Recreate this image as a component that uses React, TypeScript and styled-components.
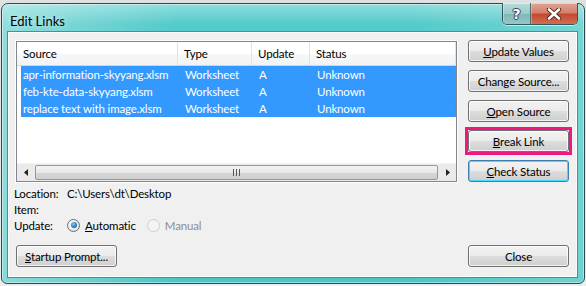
import React from 'react';
import styled, { createGlobalStyle, css } from 'styled-components';

const GlobalStyle = createGlobalStyle`
    html, body {
        margin: 0;
        padding: 0;
        background: #e6e8e8;
    }
    body {
        font-family: Lato, 'Noto Sans', sans-serif;
        font-size: 11.5px;
        letter-spacing: -0.15px;
        color: #000;
    }
`;

const rows = [
    { source: 'apr-information-skyyang.xlsm', type: 'Worksheet', update: 'A', status: 'Unknown' },
    { source: 'feb-kte-data-skyyang.xlsm', type: 'Worksheet', update: 'A', status: 'Unknown' },
    { source: 'replace text with image.xlsm', type: 'Worksheet', update: 'A', status: 'Unknown' },
];

const columns = ['Source', 'Type', 'Update', 'Status'];
const colTemplate = '161px 74px 58px 1fr';

export default function App() {
    return (
        <>
            <GlobalStyle />
            <Page>
                <Window>
                    <TitleBar>
                        <Title>Edit Links</Title>
                        <Controls>
                            <HelpBtn>?</HelpBtn>
                            <CloseBtn>
                                <svg width="16" height="12" viewBox="0 0 16 12">
                                    <path d="M3 1.5 L13 10.5 M13 1.5 L3 10.5" stroke="#4a2a24" strokeWidth="4.4" strokeLinecap="round" />
                                    <path d="M3 1.5 L13 10.5 M13 1.5 L3 10.5" stroke="#fff" strokeWidth="2.6" strokeLinecap="round" />
                                </svg>
                            </CloseBtn>
                        </Controls>
                    </TitleBar>
                    <Body>
                        <LeftCol>
                            <ListView>
                                <Header>
                                    {columns.map((c) => (
                                        <HeaderCell key={c}>{c}</HeaderCell>
                                    ))}
                                </Header>
                                <Rows>
                                    {rows.map((r, i) => (
                                        <Row key={r.source} $focused={i === rows.length - 1}>
                                            <Cell>{r.source}</Cell>
                                            <Cell>{r.type}</Cell>
                                            <Cell>{r.update}</Cell>
                                            <Cell>{r.status}</Cell>
                                        </Row>
                                    ))}
                                </Rows>
                                <HScroll>
                                    <Arrow>
                                        <svg width="4" height="7" viewBox="0 0 4 7"><path d="M4 0 L0 3.5 L4 7 Z" fill="#222" /></svg>
                                    </Arrow>
                                    <Thumb>
                                        <Grip />
                                    </Thumb>
                                    <Arrow>
                                        <svg width="4" height="7" viewBox="0 0 4 7"><path d="M0 0 L4 3.5 L0 7 Z" fill="#222" /></svg>
                                    </Arrow>
                                </HScroll>
                            </ListView>
                            <Info>
                                <Label>Location:</Label>
                                <span>C:\Users\dt\Desktop</span>
                                <Label>Item:</Label>
                                <span />
                                <Label>Update:</Label>
                                <Radios>
                                    <RadioOpt>
                                        <Radio $checked />
                                        <span><u>A</u>utomatic</span>
                                    </RadioOpt>
                                    <RadioOpt $disabled>
                                        <Radio $disabled />
                                        <span>Manual</span>
                                    </RadioOpt>
                                </Radios>
                            </Info>
                            <Spacer />
                            <Button><u>S</u>tartup Prompt...</Button>
                        </LeftCol>
                        <RightCol>
                            <Button><u>U</u>pdate Values</Button>
                            <Button>Chan<u>g</u>e Source...</Button>
                            <Button><u>O</u>pen Source</Button>
                            <Button $marked><u>B</u>reak Link</Button>
                            <Button $default><u>C</u>heck Status</Button>
                            <Spacer />
                            <Button>Close</Button>
                        </RightCol>
                    </Body>
                </Window>
            </Page>
        </>
    );
}

const Page = styled.div`
    width: 586px;
    height: 286px;
    padding: 3px 0 0 1px;
    box-sizing: border-box;
    background: linear-gradient(#dfe1e1, #eceeee);
`;

const Window = styled.div`
    width: 584px;
    height: 281px;
    box-sizing: border-box;
    border: 1px solid #2d4a4c;
    border-radius: 7px 7px 6px 6px;
    padding: 0 6px 5px 5px;
    display: flex;
    flex-direction: column;
    background:
        linear-gradient(90deg, rgba(255,255,255,0.35) 0%, rgba(255,255,255,0) 30%, rgba(255,255,255,0) 70%, rgba(255,255,255,0.2) 100%),
        linear-gradient(#8fdede 0px, #54caca 20px, #48c7c6 100%);
    box-shadow: inset 0 0 0 1px rgba(255,255,255,0.45);
`;

const TitleBar = styled.div`
    height: 27px;
    display: flex;
    align-items: flex-start;
    justify-content: space-between;
`;

const Title = styled.div`
    padding: 9px 0 0 3px;
    font-size: 13px;
    letter-spacing: 0;
    color: #000;
    text-shadow: 0 0 6px rgba(255,255,255,0.8);
`;

const Controls = styled.div`
    display: flex;
    margin-top: -1px;
    border: 1px solid #35575a;
    border-top: none;
    border-radius: 0 0 5px 5px;
    overflow: hidden;
    box-shadow: 0 1px 0 rgba(255,255,255,0.6);
`;

const ctrlBase = css`
    height: 21px;
    display: flex;
    align-items: center;
    justify-content: center;
    box-shadow: inset 0 1px 0 rgba(255,255,255,0.5), inset 1px 0 0 rgba(255,255,255,0.3);
`;

const HelpBtn = styled.div`
    ${ctrlBase};
    width: 27px;
    border-right: 1px solid #4d6a6c;
    background: linear-gradient(#b6dcdc 0%, #9ccaca 50%, #7fb5b5 51%, #93c9c9 100%);
    color: #fff;
    font-family: 'DejaVu Sans', sans-serif;
    font-weight: bold;
    font-size: 14px;
    text-shadow: 0 0 1px #333, 1px 0 0 #444, -1px 0 0 #444, 0 1px 0 #444, 0 -1px 0 #444;
`;

const CloseBtn = styled.div`
    ${ctrlBase};
    width: 46px;
    background: linear-gradient(#e3a393 0%, #d58068 48%, #c4472f 52%, #d26e52 100%);
`;

const Body = styled.div`
    flex: 1;
    display: flex;
    gap: 11px;
    padding: 8px 7px 10px 8px;
    background: #f0f0f0;
    border: 1px solid #58898b;
    box-shadow: inset 0 0 0 1px #fdfdfd;
`;

const LeftCol = styled.div`
    width: 441px;
    display: flex;
    flex-direction: column;
`;

const RightCol = styled.div`
    width: 101px;
    display: flex;
    flex-direction: column;
    gap: 8px;
`;

const Spacer = styled.div`
    flex: 1;
`;

const ListView = styled.div`
    margin-top: 1px;
    height: 141px;
    box-sizing: border-box;
    border: 1px solid #828790;
    box-shadow: 0 0 0 1px #fdfdfd;
    background: #fff;
    display: flex;
    flex-direction: column;
`;

const Header = styled.div`
    height: 23px;
    display: grid;
    grid-template-columns: ${colTemplate};
    background: linear-gradient(#ffffff 0%, #ffffff 50%, #f7f8fa 51%, #f1f2f4 100%);
    border-bottom: 1px solid #d5d5d5;
`;

const HeaderCell = styled.div`
    display: flex;
    align-items: center;
    padding-left: 6px;
    border-right: 1px solid #e3e3e3;
`;

const Rows = styled.div`
    flex: 1;
    padding: 0 0 0 4px;
`;

const Row = styled.div<{ $focused?: boolean }>`
    height: 17px;
    box-sizing: border-box;
    display: grid;
    grid-template-columns: 157px 74px 58px 1fr;
    align-items: center;
    background: #3399ff;
    color: #fff;
    ${(p) => p.$focused && css`
        outline: 1px dotted #c0722a;
        outline-offset: -1px;
    `}
`;

const Cell = styled.div`
    padding-left: 2px;
    white-space: nowrap;
    overflow: hidden;
    &:not(:first-child) {
        padding-left: 7px;
    }
`;

const HScroll = styled.div`
    height: 17px;
    display: flex;
    align-items: stretch;
    background: #eaeaea;
    border-top: 1px solid #f4f4f4;
`;

const Arrow = styled.div`
    width: 17px;
    display: flex;
    align-items: center;
    justify-content: center;
`;

const Thumb = styled.div`
    flex: 1;
    margin: 1px 1px;
    border: 1px solid #979797;
    border-radius: 2px;
    background: linear-gradient(#f3f3f3 0%, #e8e8e8 50%, #d6d6d6 51%, #cfcfcf 100%);
    display: flex;
    align-items: center;
    justify-content: center;
`;

const Grip = styled.div`
    width: 7px;
    height: 7px;
    background: repeating-linear-gradient(90deg, #555 0 1px, transparent 1px 3px);
`;

const Info = styled.div`
    margin: 3px 0 0 -2px;
    display: grid;
    grid-template-columns: 53px 1fr;
    grid-auto-rows: 16px;
    align-items: center;
`;

const Label = styled.span``;

const Radios = styled.div`
    display: flex;
    align-items: center;
    gap: 11px;
`;

const RadioOpt = styled.label<{ $disabled?: boolean }>`
    display: flex;
    align-items: center;
    gap: 5px;
    color: ${(p) => (p.$disabled ? '#8d8d8d' : '#000')};
`;

const Radio = styled.span<{ $checked?: boolean; $disabled?: boolean }>`
    width: 11px;
    height: 11px;
    border-radius: 50%;
    border: 1px solid ${(p) => (p.$disabled ? '#cfcfcf' : '#6c6c6c')};
    background: ${(p) => (p.$disabled ? '#f4f4f4' : 'radial-gradient(circle at 40% 35%, #ffffff, #dcdcdc)')};
    position: relative;
    ${(p) => p.$checked && css`
        &::after {
            content: '';
            position: absolute;
            left: 2.5px;
            top: 2.5px;
            width: 6px;
            height: 6px;
            border-radius: 50%;
            background: radial-gradient(circle at 40% 35%, #7fd0ff, #0d6bb3 70%, #0a3d6a);
        }
    `}
`;

const Button = styled.div<{ $marked?: boolean; $default?: boolean }>`
    position: relative;
    width: 101px;
    height: 22px;
    box-sizing: border-box;
    display: flex;
    align-items: center;
    justify-content: center;
    white-space: nowrap;
    border: 1px solid #707070;
    border-radius: 3px;
    background: linear-gradient(#f2f2f2 0%, #ebebeb 50%, #dddddd 51%, #cfcfcf 100%);
    box-shadow: inset 0 0 0 1px rgba(255,255,255,0.75);
    ${(p) => p.$default && css`
        border-color: #3c7fb1;
        box-shadow: inset 0 0 0 1px #48d8fb;
    `}
    ${(p) => p.$marked && css`
        &::after {
            content: '';
            position: absolute;
            inset: -4px;
            border: 3px solid #f0187f;
        }
    `}
`;
